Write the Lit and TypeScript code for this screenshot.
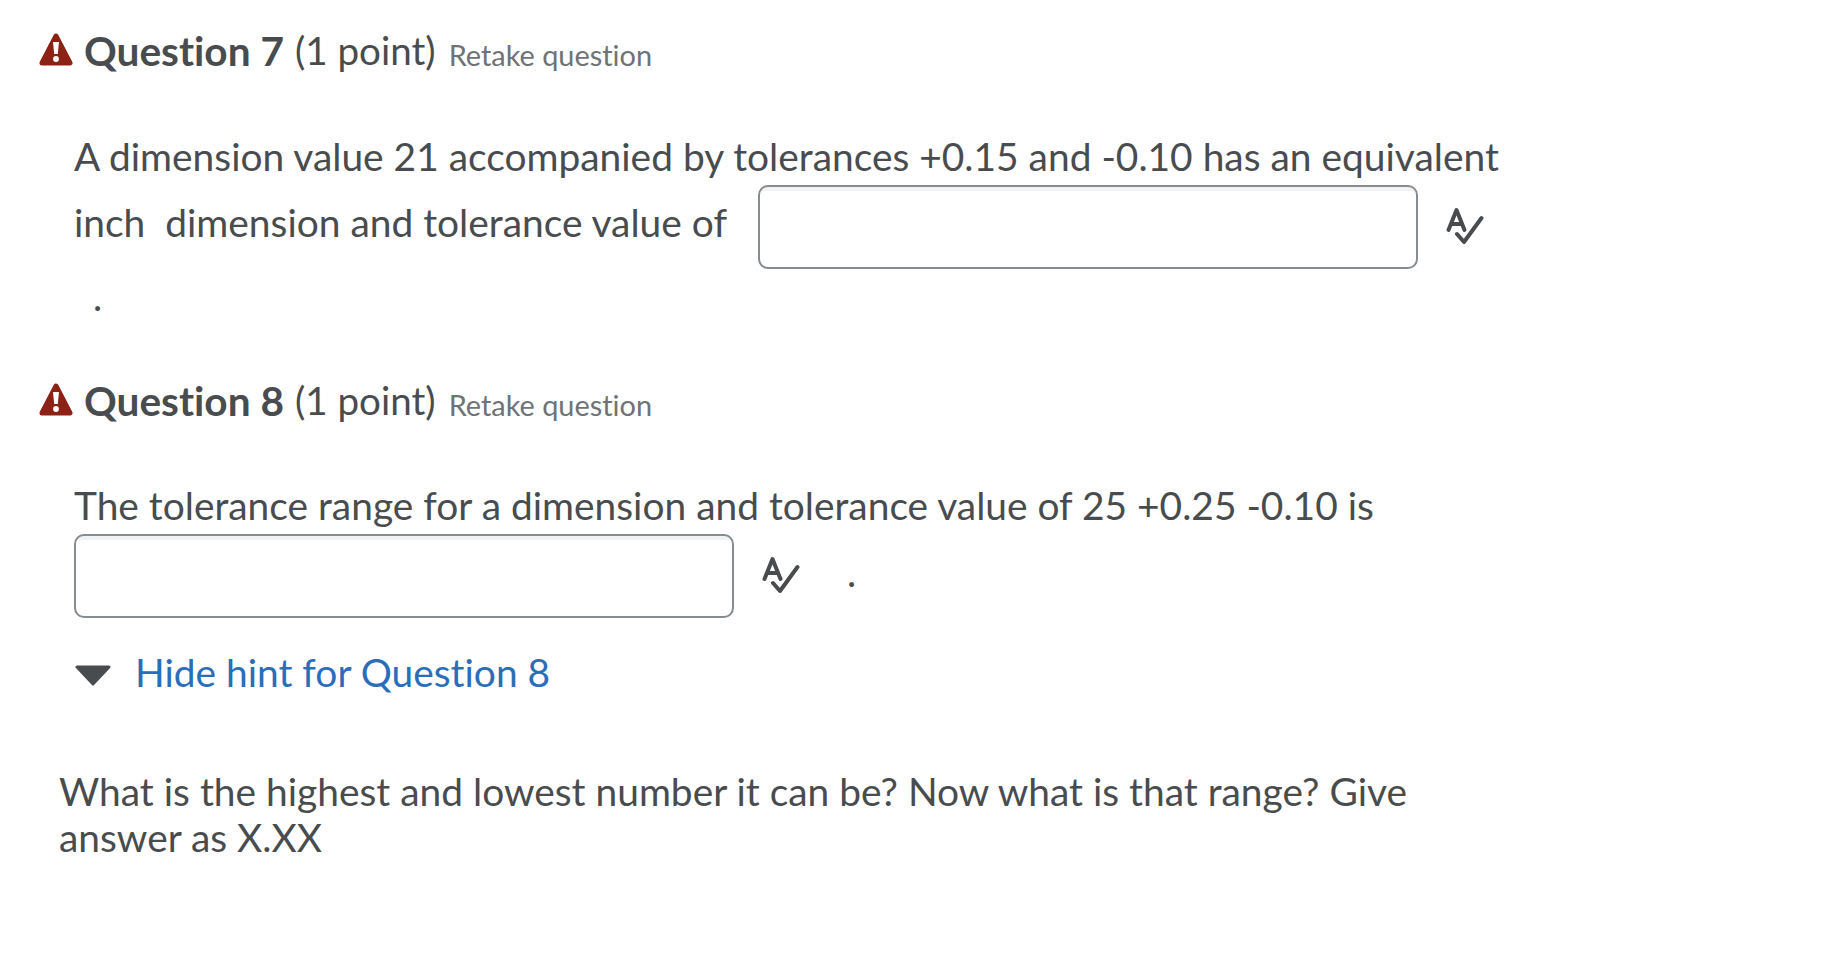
import { html, css, LitElement, svg } from 'lit';
import { customElement, property } from 'lit/decorators.js';

const spellIcon = svg`<svg class="spell" viewBox="0 0 40 40" width="40" height="40" fill="none" stroke="#494c4e" stroke-width="4" stroke-linecap="round" stroke-linejoin="round">
  <path d="M4.5 23 L12.5 3 L20.5 23 M7 17 H18"/>
  <path d="M13 27 L20 35 L37.5 11"/>
</svg>`;

@customElement('quiz-heading')
class QuizHeading extends LitElement {
  static styles = css`
    :host { display: flex; align-items: center; height: 50px; color: #494c4e; font-variant-ligatures: none; }
    .warn { width: 34px; height: 33px; margin: -2px 11px 0 39px; flex: none; }
    .num { font-size: 40.6px; font-weight: 700; }
    .pts { font-size: 38.6px; margin-left: 11px; }
    .retake { font-size: 28.9px; color: #6e7376; margin-left: 13px; position: relative; top: 4px; }
  `;

  @property({ type: String }) num = '';

  render() {
    return html`
      <svg class="warn" viewBox="0 0 34 33">
        <path fill="#8c2116" stroke="#8c2116" stroke-width="5" stroke-linejoin="round" d="M17 3 L31 30 H3 Z"/>
        <path fill="#fff" d="M14 9 h6 l-1.2 12 h-3.6 Z"/>
        <circle fill="#fff" cx="17" cy="26" r="2.9"/>
      </svg>
      <span class="num">Question ${this.num}</span>
      <span class="pts">(1 point)</span>
      <span class="retake">Retake question</span>
    `;
  }
}

@customElement('app-root')
export class AppRoot extends LitElement {
  static styles = css`
    :host {
      display: block;
      height: 967px;
      background: #fff;
      color: #494c4e;
      font-family: Lato, sans-serif;
      font-variant-ligatures: none;
      overflow: hidden;
    }
    .page { padding-top: 25px; }
    .body { font-size: 38.9px; padding-left: 74px; }
    .q7 { margin-top: 59px; }
    .q7 .line1 { height: 49px; line-height: 45px; }
    .row { display: flex; align-items: center; }
    .q7 .row { height: 87px; }
    .q7 .row span { margin-bottom: 9px; }
    .box {
      width: 660px;
      height: 84px;
      box-sizing: border-box;
      border: 2px solid #868c8f;
      border-radius: 10px;
      background: linear-gradient(#f1f2f3 0, #f1f2f3 4px, #fff 4px);
      flex: none;
    }
    .q7 .box { margin-left: 31px; }
    .spell { margin-left: 26px; flex: none; }
    .dot { line-height: 47px; }
    .q7 .dot { padding-left: 19px; margin-top: 3px; height: 47px; }
    .q8-head { margin-top: 55px; }
    .q8 { margin-top: 57px; }
    .q8 .line1 { height: 47px; line-height: 47px; }
    .q8 .row { margin-top: 5px; }
    .q8 .dot { margin: 0 0 8px 47px; }
    .hint { display: flex; align-items: center; margin-top: 29px; height: 50px; color: #2a6ebb; }
    .caret { width: 38px; height: 22px; margin-right: 23px; margin-top: 6px; flex: none; }
    .help { font-size: 38.9px; line-height: 46px; margin: 71px 0 0 59px; width: 1400px; }
  `;

  render() {
    return html`
      <div class="page">
        <quiz-heading num="7"></quiz-heading>
        <div class="body q7">
          <div class="line1">A dimension value 21 accompanied by tolerances +0.15 and -0.10 has an equivalent</div>
          <div class="row">
            <span>inch&nbsp; dimension and tolerance value of</span>
            <div class="box"></div>
            ${spellIcon}
          </div>
          <div class="dot">.</div>
        </div>
        <quiz-heading class="q8-head" num="8"></quiz-heading>
        <div class="body q8">
          <div class="line1">The tolerance range for a dimension and tolerance value of 25 +0.25 -0.10 is</div>
          <div class="row">
            <div class="box"></div>
            ${spellIcon}
            <span class="dot">.</span>
          </div>
          <div class="hint">
            <svg class="caret" viewBox="0 0 38 22">
              <path fill="#494c4e" stroke="#494c4e" stroke-width="3" stroke-linejoin="round" d="M3 3 H35 L19 20 Z"/>
            </svg>
            <span>Hide hint for Question 8</span>
          </div>
        </div>
        <div class="help">What is the highest and lowest number it can be? Now what is that range? Give answer as X.XX</div>
      </div>
    `;
  }
}
